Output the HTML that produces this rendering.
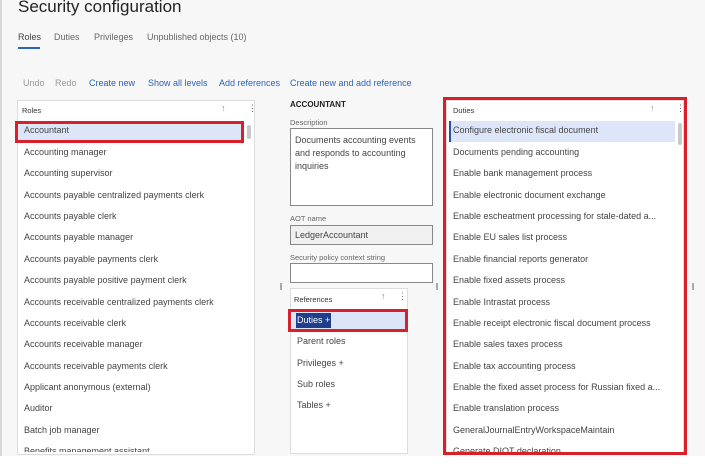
<!DOCTYPE html>
<html><head><style>
*{margin:0;padding:0;box-sizing:border-box}
body{width:705px;height:464px;overflow:hidden;background:#fff;font-family:"Liberation Sans",sans-serif;color:#333;position:relative}
.bg{position:absolute;left:0;top:0;width:705px;height:456px;background:#f7f7f7;border-left:2px solid #d8d8d8}
.a{position:absolute;white-space:nowrap}
.t{font-size:9px;color:#444}
.lnk{color:#2b64b8;font-size:9px}
.box{position:absolute;background:#fff;border:1px solid #ddd}
.row{position:absolute;font-size:9px;color:#444;white-space:nowrap}
.red{position:absolute;border:3px solid #d9202a}
.lbl{font-size:7.5px;color:#666}
.inp{position:absolute;border:1px solid #888;background:#fff}
</style></head><body>
<div class="bg"></div>
<div class="a" style="left:18px;top:-3px;font-size:17px;color:#222">Security configuration</div>
<div class="a t" style="left:18px;top:32px">Roles</div>
<div class="a" style="left:18px;top:47px;width:22px;height:2px;background:#2b64b8"></div>
<div class="a t" style="left:54px;top:32px;color:#666">Duties</div>
<div class="a t" style="left:94px;top:32px;color:#666">Privileges</div>
<div class="a t" style="left:147px;top:32px;color:#666">Unpublished objects (10)</div>
<div class="a t" style="left:23px;top:78px;color:#999">Undo</div>
<div class="a t" style="left:55px;top:78px;color:#999">Redo</div>
<div class="a lnk" style="left:89px;top:78px">Create new</div>
<div class="a lnk" style="left:148px;top:78px">Show all levels</div>
<div class="a lnk" style="left:219px;top:78px">Add references</div>
<div class="a lnk" style="left:290px;top:78px">Create new and add reference</div>

<div class="box" style="left:17px;top:100px;width:238px;height:355px;overflow:hidden">
<div class="row" style="left:4px;top:5px;font-size:7.5px;color:#333">Roles</div>
<div class="row" style="left:203px;top:2px;color:#888">↑</div>
<div class="row" style="left:230px;top:2px;color:#666">⋮</div>
<div style="position:absolute;left:0;top:22px;width:226px;height:19px;background:#dce6f8"></div>
<div style="position:absolute;left:229px;top:24px;width:4px;height:14px;background:#c8c8c8;border-radius:2px"></div>
</div>
<div class="red" style="left:15px;top:121px;width:229px;height:22px"></div>
<div id="roles"></div>

<div class="a" style="left:290px;top:100px;font-size:8px;font-weight:bold;color:#222">ACCOUNTANT</div>
<div class="a lbl" style="left:290px;top:118px">Description</div>
<div class="inp" style="left:290px;top:128px;width:143px;height:78px"></div>
<div class="a t" style="left:295px;top:134px;line-height:13px;white-space:normal;width:135px">Documents accounting events and responds to accounting inquiries</div>
<div class="a lbl" style="left:290px;top:214px">AOT name</div>
<div class="inp" style="left:290px;top:225px;width:143px;height:20px;background:#f0f0f0"></div>
<div class="a t" style="left:295px;top:230px">LedgerAccountant</div>
<div class="a lbl" style="left:290px;top:253px">Security policy context string</div>
<div class="inp" style="left:290px;top:263px;width:143px;height:20px"></div>

<div class="box" style="left:290px;top:288px;width:118px;height:166px"></div>
<div class="a" style="left:294px;top:295px;font-size:7.5px;color:#333">References</div>
<div class="a" style="left:381px;top:291px;font-size:9px;color:#888">↑</div>
<div class="a" style="left:398px;top:291px;font-size:9px;color:#666">⋮</div>
<div class="a" style="left:292px;top:312px;width:114px;height:18px;background:#dce6f8"></div>
<div class="a" style="left:296px;top:313px;height:15px;padding:0 1px;background:#1f3e8c;color:#fff;font-size:9px;line-height:15px">Duties +</div>
<div class="red" style="left:288px;top:309px;width:120px;height:23px"></div>
<div class="a t" style="left:297px;top:336px">Parent roles</div>
<div class="a t" style="left:297px;top:358px">Privileges +</div>
<div class="a t" style="left:297px;top:379px">Sub roles</div>
<div class="a t" style="left:297px;top:400px">Tables +</div>

<div class="box" style="left:446px;top:100px;width:238px;height:353px;overflow:hidden">
<div class="row" style="left:6px;top:5px;font-size:7.5px;color:#333">Duties</div>
<div class="row" style="left:203px;top:2px;color:#888">↑</div>
<div class="row" style="left:229px;top:2px;color:#666">⋮</div>
<div style="position:absolute;left:2px;top:20px;width:226px;height:21px;background:#dce6f8;border-left:2px solid #2b4fa8"></div>
<div style="position:absolute;left:231px;top:22px;width:4px;height:22px;background:#c8c8c8;border-radius:2px"></div>
</div>
<div class="red" style="left:443px;top:97px;width:244px;height:358px"></div>
<div id="duties"></div>

<div class="a" style="left:280px;top:283px;width:2px;height:7px;background:#aaa"></div>
<div class="a" style="left:436px;top:283px;width:2px;height:7px;background:#aaa"></div>
<div class="a" style="left:692px;top:283px;width:2px;height:7px;background:#aaa"></div>

<div style="position:absolute;left:0;top:0">
<div class="row" style="left:24px;top:125px">Accountant</div>
<div class="row" style="left:24px;top:147px">Accounting manager</div>
<div class="row" style="left:24px;top:168px">Accounting supervisor</div>
<div class="row" style="left:24px;top:190px">Accounts payable centralized payments clerk</div>
<div class="row" style="left:24px;top:211px">Accounts payable clerk</div>
<div class="row" style="left:24px;top:232px">Accounts payable manager</div>
<div class="row" style="left:24px;top:254px">Accounts payable payments clerk</div>
<div class="row" style="left:24px;top:275px">Accounts payable positive payment clerk</div>
<div class="row" style="left:24px;top:297px">Accounts receivable centralized payments clerk</div>
<div class="row" style="left:24px;top:318px">Accounts receivable clerk</div>
<div class="row" style="left:24px;top:339px">Accounts receivable manager</div>
<div class="row" style="left:24px;top:361px">Accounts receivable payments clerk</div>
<div class="row" style="left:24px;top:382px">Applicant anonymous (external)</div>
<div class="row" style="left:24px;top:403px">Auditor</div>
<div class="row" style="left:24px;top:425px">Batch job manager</div>
<div class="row" style="left:24px;top:446px;height:6px;overflow:hidden">Benefits management assistant</div>

<div class="row" style="left:453px;top:125px">Configure electronic fiscal document</div>
<div class="row" style="left:453px;top:147px">Documents pending accounting</div>
<div class="row" style="left:453px;top:168px">Enable bank management process</div>
<div class="row" style="left:453px;top:190px">Enable electronic document exchange</div>
<div class="row" style="left:453px;top:211px">Enable escheatment processing for stale-dated a...</div>
<div class="row" style="left:453px;top:232px">Enable EU sales list process</div>
<div class="row" style="left:453px;top:254px">Enable financial reports generator</div>
<div class="row" style="left:453px;top:275px">Enable fixed assets process</div>
<div class="row" style="left:453px;top:297px">Enable Intrastat process</div>
<div class="row" style="left:453px;top:318px">Enable receipt electronic fiscal document process</div>
<div class="row" style="left:453px;top:339px">Enable sales taxes process</div>
<div class="row" style="left:453px;top:361px">Enable tax accounting process</div>
<div class="row" style="left:453px;top:382px">Enable the fixed asset process for Russian fixed a...</div>
<div class="row" style="left:453px;top:403px">Enable translation process</div>
<div class="row" style="left:453px;top:425px">GeneralJournalEntryWorkspaceMaintain</div>
<div class="row" style="left:453px;top:446px;height:6px;overflow:hidden">Generate DIOT declaration</div>
</div>
</body></html>
